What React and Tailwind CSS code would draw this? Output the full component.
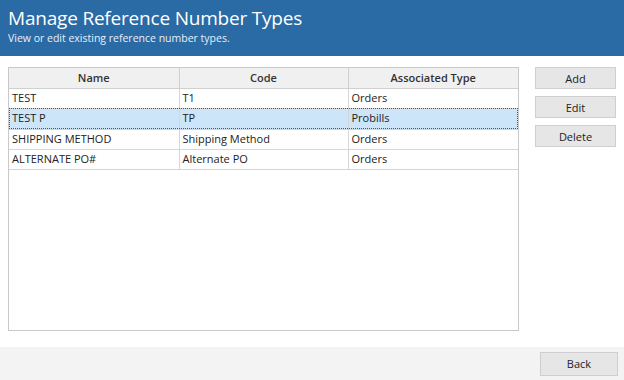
import React from 'react'

const rows = [
  { name: 'TEST', code: 'T1', type: 'Orders' },
  { name: 'TEST P', code: 'TP', type: 'Probills', selected: true },
  { name: 'SHIPPING METHOD', code: 'Shipping Method', type: 'Orders' },
  { name: 'ALTERNATE PO#', code: 'Alternate PO', type: 'Orders' },
]

function SideButton({ children }) {
  return (
    <button className="w-[81px] h-[22px] bg-[#e6e6e6] border border-[#cfcfcf] text-[11px] text-[#222] leading-none">
      {children}
    </button>
  )
}

export default function App() {
  return (
    <div className="w-[624px] h-[380px] bg-white flex flex-col font-['Open_Sans',sans-serif] overflow-hidden">
      {/* header */}
      <div className="h-[56px] bg-[#2a6aa5] px-[8px] pt-[5px] text-white">
        <h1 className="text-[19px] leading-[26px] tracking-[-0.2px]">Manage Reference Number Types</h1>
        <p className="text-[10.5px] leading-[14px] text-[#e8f0f8]">View or edit existing reference number types.</p>
      </div>

      {/* body */}
      <div className="flex-1 flex pl-[8px] pt-[11px] gap-[16px]">
        <div className="w-[511px] h-[264px] border border-[#c9c9c9] bg-white">
          <table className="w-full border-collapse text-[11px] text-[#222] table-fixed">
            <thead>
              <tr className="bg-[#f0f0f0] h-[20px]">
                <th className="font-semibold text-[#333] border-r border-b border-[#d0d0d0] w-[170px] text-center">Name</th>
                <th className="font-semibold text-[#333] border-r border-b border-[#d0d0d0] w-[169px] text-center">Code</th>
                <th className="font-semibold text-[#333] border-b border-[#d0d0d0] text-center">Associated Type</th>
              </tr>
            </thead>
            <tbody>
              {rows.map((r) => (
                <tr
                  key={r.name}
                  className={r.selected ? 'h-[21px] bg-[#cde5f8] outline outline-1 outline-dotted outline-[#555] -outline-offset-1' : 'h-[20px]'}
                >
                  <td className="px-[3px] border-r border-b border-[#d6d6d6] whitespace-nowrap">{r.name}</td>
                  <td className="px-[3px] border-r border-b border-[#d6d6d6] whitespace-nowrap">{r.code}</td>
                  <td className="px-[3px] border-b border-[#d6d6d6] whitespace-nowrap">{r.type}</td>
                </tr>
              ))}
            </tbody>
          </table>
        </div>

        <div className="flex flex-col gap-[7px]">
          <SideButton>Add</SideButton>
          <SideButton>Edit</SideButton>
          <SideButton>Delete</SideButton>
        </div>
      </div>

      {/* footer */}
      <div className="h-[33px] bg-[#f3f3f3] flex justify-end items-start pt-[5px] pr-[6px]">
        <button className="w-[78px] h-[24px] bg-[#e6e6e6] border border-[#cfcfcf] text-[11px] text-[#222]">Back</button>
      </div>
    </div>
  )
}
